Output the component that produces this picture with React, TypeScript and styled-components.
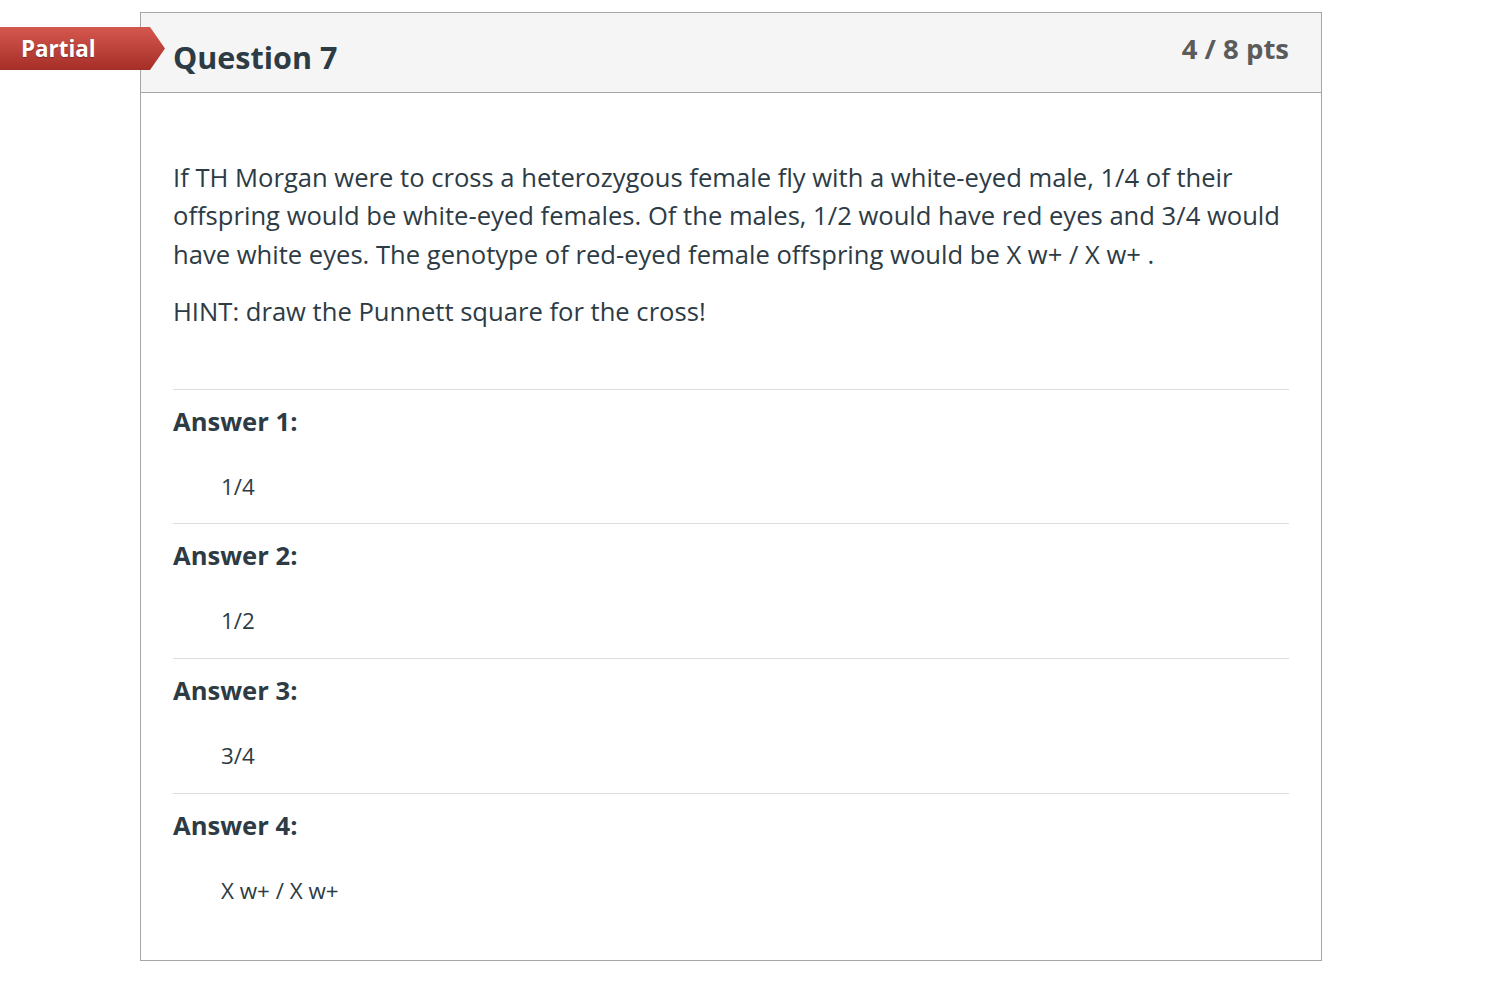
import styled, { createGlobalStyle } from "styled-components";

const GlobalStyle = createGlobalStyle`
  body {
    margin: 0;
    background: #ffffff;
    font-family: "Open Sans", "Liberation Sans", sans-serif;
    color: #2d3b45;
  }
`;

const Page = styled.div`
  padding: 12px 0 0 140px;
`;

const Card = styled.div`
  position: relative;
  width: 1182px;
  box-sizing: border-box;
  border: 1px solid #a6a6a6;
`;

// red "Partial" flag with a pointed end, overlapping the card's left edge
const Ribbon = styled.div`
  position: absolute;
  z-index: 1;
  left: -141px;
  top: 14px;
  width: 165px;
  height: 43px;
  display: flex;
  align-items: center;
  padding-left: 21px;
  box-sizing: border-box;
  background: linear-gradient(#d5584e, #a52e27);
  clip-path: polygon(0 0, 150px 0, 165px 50%, 150px 100%, 0 100%);
  color: #ffffff;
  font-size: 22.4px;
  font-weight: 700;
  text-shadow: 0 1px 1px rgba(0, 0, 0, 0.3);
`;

const Header = styled.div`
  display: flex;
  justify-content: space-between;
  align-items: flex-start;
  height: 80px;
  box-sizing: border-box;
  padding: 0 32px;
  background: #f5f5f5;
  border-bottom: 1px solid #a6a6a6;
`;

const Title = styled.h2`
  margin: 24px 0 0;
  font-size: 30.5px;
  font-weight: 700;
  line-height: 40px;
  color: #2d3b45;
`;

const Points = styled.div`
  margin-top: 18px;
  font-size: 27.5px;
  font-weight: 700;
  line-height: 36px;
  color: #5b5b5b;
`;

const Body = styled.div`
  padding: 66px 32px 33px;
`;

const Paragraph = styled.p`
  margin: 0 0 19px;
  font-size: 25.6px;
  line-height: 38.4px;
  color: #2d3b45;
`;

const Answers = styled.div`
  margin-top: 57px;
`;

const AnswerBlock = styled.div`
  border-top: 1px solid #dddddd;
  padding: 14px 0 20.7px;
`;

const AnswerLabel = styled.div`
  font-size: 25.6px;
  font-weight: 700;
  line-height: 36px;
  color: #2d3b45;
`;

const AnswerValue = styled.div`
  margin-top: 31px;
  padding-left: 48px;
  font-size: 22.4px;
  line-height: 32px;
  color: #2d3b45;
`;

const answers = ["1/4", "1/2", "3/4", "X w+ / X w+"];

export default function App() {
  return (
    <Page>
      <GlobalStyle />
      <Card>
        <Ribbon>Partial</Ribbon>
        <Header>
          <Title>Question 7</Title>
          <Points>4 / 8 pts</Points>
        </Header>
        <Body>
          <Paragraph>
            If TH Morgan were to cross a heterozygous female fly with a white-eyed male, 1/4 of
            their offspring would be white-eyed females. Of the males, 1/2 would have red eyes
            and 3/4 would have white eyes. The genotype of red-eyed female offspring would be X
            w+ / X w+ .
          </Paragraph>
          <Paragraph>HINT: draw the Punnett square for the cross!</Paragraph>
          <Answers>
            {answers.map((a, i) => (
              <AnswerBlock key={i}>
                <AnswerLabel>Answer {i + 1}:</AnswerLabel>
                <AnswerValue>{a}</AnswerValue>
              </AnswerBlock>
            ))}
          </Answers>
        </Body>
      </Card>
    </Page>
  );
}
